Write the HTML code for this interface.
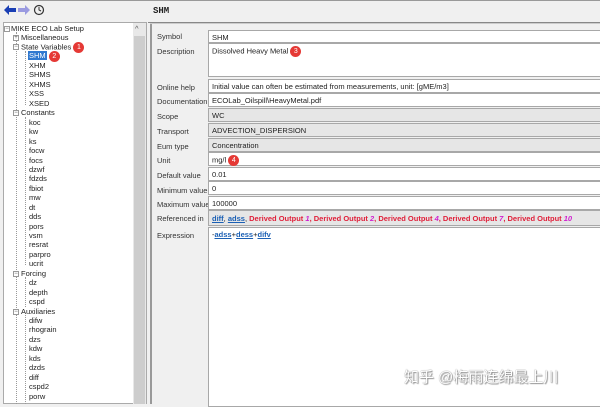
<!DOCTYPE html>
<html><head><meta charset="utf-8"><style>
*{margin:0;padding:0;box-sizing:border-box}
body{width:600px;height:404px;overflow:hidden;background:#f0f0f0;font-family:"Liberation Sans",sans-serif;font-size:7px;color:#222;position:relative}
.a{position:absolute}
.t{position:absolute;font-size:7.5px;line-height:9px;white-space:nowrap}
.lbl{position:absolute;left:157px;font-size:7.5px;white-space:nowrap;color:#333}
.f{position:absolute;left:208px;right:-2px;border:1px solid #a8a8a8;background:#fff;font-size:7.5px;padding:2px 3px;line-height:9px;white-space:nowrap}
.g{background:#e6e6e6}
.badge{display:inline-block;width:11px;height:11px;border-radius:50%;background:#e53935;color:#fff;font-size:7px;line-height:11px;text-align:center;vertical-align:middle}
.box{position:absolute;width:6px;height:6px;border:1px solid #999;background:#fff;font-size:6px;line-height:4px;text-align:center;color:#555}
a{color:#1a5fb4;font-weight:bold;text-decoration:underline}
.r{color:#e0203a;font-weight:bold}
.m{color:#d020d0;font-style:italic;font-weight:bold}
</style></head><body>
<div class="a" style="left:0;top:0;width:600px;height:1px;background:#999"></div>
<svg class="a" style="left:3px;top:3px" width="44" height="14">
<path d="M1 7 L6 2 L6 5 L13 5 L13 9 L6 9 L6 12 Z" fill="#1a3fb4"/>
<path d="M27 7 L22 2 L22 5 L15 5 L15 9 L22 9 L22 12 Z" fill="#9a9ae0"/>
<circle cx="36" cy="7" r="4.5" fill="none" stroke="#333" stroke-width="1.2"/><path d="M36 4 L36 7 L38 8" stroke="#333" fill="none"/>
</svg>
<div class="a" style="left:3px;top:22px;width:144px;height:382px;background:#fff;border:1px solid #aaa"></div>
<div class="a" style="left:133px;top:23px;width:13px;height:381px;background:#e8e8e8"></div>
<div class="a" style="left:134px;top:36px;width:11px;height:368px;background:#cdcdcd"></div>
<div class="t" style="left:135px;top:24px;color:#555">^</div>
<div class="a" style="left:147px;top:22px;width:3px;height:382px;background:#f0f0f0"></div>
<div class="a" style="left:16px;top:32px;width:1px;height:372px;border-left:1px dotted #999"></div>
<div class="a" style="left:25px;top:51px;width:1px;height:54px;border-left:1px dotted #999"></div>
<div class="a" style="left:25px;top:117px;width:1px;height:148px;border-left:1px dotted #999"></div>
<div class="a" style="left:25px;top:277px;width:1px;height:30px;border-left:1px dotted #999"></div>
<div class="a" style="left:25px;top:315px;width:1px;height:89px;border-left:1px dotted #999"></div>
<div class="box" style="left:4px;top:26px">−</div><div class="t" style="left:11px;top:24px">MIKE ECO Lab Setup</div>
<div class="box" style="left:13px;top:35px">+</div><div class="t" style="left:21px;top:33px">Miscellaneous</div>
<div class="box" style="left:13px;top:44px">−</div><div class="t" style="left:21px;top:42px">State Variables <span class="badge">1</span></div>
<div class="t" style="left:28px;top:51px"><span style="background:#3079d0;color:#fff;padding:0 1px">SHM</span> <span class="badge">2</span></div>
<div class="t" style="left:29px;top:61px">XHM</div>
<div class="t" style="left:29px;top:70px">SHMS</div>
<div class="t" style="left:29px;top:80px">XHMS</div>
<div class="t" style="left:29px;top:89px">XSS</div>
<div class="t" style="left:29px;top:99px">XSED</div>
<div class="box" style="left:13px;top:110px">−</div><div class="t" style="left:21px;top:108px">Constants</div>
<div class="t" style="left:29px;top:118px">koc</div>
<div class="t" style="left:29px;top:127px">kw</div>
<div class="t" style="left:29px;top:137px">ks</div>
<div class="t" style="left:29px;top:146px">focw</div>
<div class="t" style="left:29px;top:156px">focs</div>
<div class="t" style="left:29px;top:165px">dzwf</div>
<div class="t" style="left:29px;top:174px">fdzds</div>
<div class="t" style="left:29px;top:184px">fbiot</div>
<div class="t" style="left:29px;top:193px">mw</div>
<div class="t" style="left:29px;top:203px">dt</div>
<div class="t" style="left:29px;top:212px">dds</div>
<div class="t" style="left:29px;top:222px">pors</div>
<div class="t" style="left:29px;top:231px">vsm</div>
<div class="t" style="left:29px;top:240px">resrat</div>
<div class="t" style="left:29px;top:250px">parpro</div>
<div class="t" style="left:29px;top:259px">ucrit</div>
<div class="box" style="left:13px;top:271px">−</div><div class="t" style="left:21px;top:269px">Forcing</div>
<div class="t" style="left:29px;top:278px">dz</div>
<div class="t" style="left:29px;top:288px">depth</div>
<div class="t" style="left:29px;top:297px">cspd</div>
<div class="box" style="left:13px;top:309px">−</div><div class="t" style="left:21px;top:307px">Auxiliaries</div>
<div class="t" style="left:29px;top:316px">difw</div>
<div class="t" style="left:29px;top:325px">rhograin</div>
<div class="t" style="left:29px;top:335px">dzs</div>
<div class="t" style="left:29px;top:344px">kdw</div>
<div class="t" style="left:29px;top:354px">kds</div>
<div class="t" style="left:29px;top:363px">dzds</div>
<div class="t" style="left:29px;top:373px">diff</div>
<div class="t" style="left:29px;top:382px">cspd2</div>
<div class="t" style="left:29px;top:392px">porw</div>
<div class="t" style="left:153px;top:7px;font-family:'Liberation Mono',monospace;font-weight:bold;font-size:9px">SHM</div>
<div class="a" style="left:148px;top:22px;width:452px;height:1px;background:#888"></div>
<div class="a" style="left:150px;top:23px;width:2px;height:381px;background:#999"></div>
<div class="a" style="left:150px;top:23px;width:450px;height:1px;background:#ccc"></div>
<div class="lbl" style="top:32px">Symbol</div><div class="f" style="top:30px;height:13px">SHM</div>
<div class="lbl" style="top:47px">Description</div><div class="f" style="top:43px;height:34px">Dissolved Heavy Metal <span class="badge">3</span></div>
<div class="lbl" style="top:83px">Online help</div><div class="f" style="top:79px;height:14px">Initial value can often be estimated from measurements, unit: [gME/m3]</div>
<div class="lbl" style="top:97px">Documentation</div><div class="f" style="top:93px;height:14px">ECOLab_Oilspill\HeavyMetal.pdf</div>
<div class="lbl" style="top:112px">Scope</div><div class="f g" style="top:108px;height:14px">WC</div>
<div class="lbl" style="top:127px">Transport</div><div class="f g" style="top:123px;height:14px">ADVECTION_DISPERSION</div>
<div class="lbl" style="top:142px">Eum type</div><div class="f g" style="top:138px;height:14px">Concentration</div>
<div class="lbl" style="top:156px">Unit</div><div class="f" style="top:152px;height:14px">mg/l <span class="badge">4</span></div>
<div class="lbl" style="top:171px">Default value</div><div class="f" style="top:167px;height:14px">0.01</div>
<div class="lbl" style="top:186px">Minimum value</div><div class="f" style="top:181px;height:14px">0</div>
<div class="lbl" style="top:200px">Maximum value</div><div class="f" style="top:196px;height:14px">100000</div>
<div class="lbl" style="top:214px">Referenced in</div><div class="f g" style="top:210px;height:16px;padding-top:3px"><a>diff</a>, <a>adss</a>, <span class="r">Derived Output <span class="m">1</span>, Derived Output <span class="m">2</span>, Derived Output <span class="m">4</span>, Derived Output <span class="m">7</span>, Derived Output <span class="m">10</span></span></div>
<div class="lbl" style="top:231px">Expression</div><div class="f" style="top:227px;height:180px">-<a>adss</a>+<a>dess</a>+<a>difv</a></div>
<div class="t" style="left:404px;top:369px;font-family:'Liberation Sans','Noto Sans CJK SC',sans-serif;font-size:15px;line-height:18px;color:#fff;text-shadow:0 0 1px #666,1px 1px 1px #999">知乎 @梅雨连绵最上川</div>
</body></html>
